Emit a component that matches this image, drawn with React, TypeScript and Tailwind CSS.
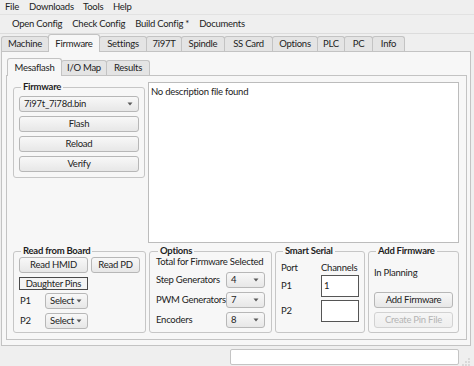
import React from "react";

const Arrow = () => (
  <svg width="6" height="4" viewBox="0 0 6 4" className="shrink-0">
    <path d="M0.5 0.5 L5.5 0.5 L3 3.5 Z" fill="#5a5a5a" />
  </svg>
);

function Btn({
  children,
  className = "",
  disabled = false,
}: {
  children: React.ReactNode;
  className?: string;
  disabled?: boolean;
}) {
  return (
    <div
      className={
        "flex items-center justify-center h-[16px] rounded-[3px] border bg-linear-to-b whitespace-nowrap " +
        (disabled
          ? "border-[#d2d2d2] from-[#f6f6f6] to-[#eeeeee] text-[#b4b4b4] "
          : "border-[#b7b7b7] from-[#f8f8f8] to-[#e7e7e7] text-[#222] ") +
        className
      }
    >
      {children}
    </div>
  );
}

function Combo({ value, className = "" }: { value: string; className?: string }) {
  return (
    <div
      className={
        "flex items-center justify-between h-[16px] rounded-[3px] border border-[#b7b7b7] bg-linear-to-b from-[#f8f8f8] to-[#e7e7e7] pl-[4px] pr-[5px] whitespace-nowrap " +
        className
      }
    >
      <span>{value}</span>
      <Arrow />
    </div>
  );
}

function Group({
  title,
  className = "",
  children,
}: {
  title: string;
  className?: string;
  children: React.ReactNode;
}) {
  return (
    <fieldset className={"border border-[#c6c6c6] rounded-[3px] px-[5px] " + className}>
      <legend className="ml-[2px] px-[2px] font-bold leading-[10px] text-[#1e1e1e] whitespace-nowrap">{title}</legend>
      {children}
    </fieldset>
  );
}

const outerTabs: [string, string][] = [
  ["Machine", "w-[48px]"],
  ["Firmware", "w-[52px]"],
  ["Settings", "w-[48px]"],
  ["7i97T", "w-[36px]"],
  ["Spindle", "w-[44px]"],
  ["SS Card", "w-[49px]"],
  ["Options", "w-[46px]"],
  ["PLC", "w-[28px]"],
  ["PC", "w-[29px]"],
  ["Info", "w-[33px]"],
];

const innerTabs: [string, string][] = [
  ["Mesaflash", "w-[55px]"],
  ["I/O Map", "w-[46px]"],
  ["Results", "w-[44px]"],
];

export default function App() {
  return (
    <div className="w-[474px] h-[366px] overflow-hidden bg-[#efefef] text-[9.5px] tracking-[-0.25px] leading-[12px] text-[#222] font-['Lato','Noto_Sans',sans-serif] flex flex-col whitespace-nowrap">
      {/* Menubar */}
      <div className="h-[15px] flex items-center pl-[5px] border-b border-[#e2e2e2]">
        <span className="w-[24px]">File</span>
        <span className="w-[54px]">Downloads</span>
        <span className="w-[30px]">Tools</span>
        <span>Help</span>
      </div>
      {/* Toolbar */}
      <div className="h-[19px] flex items-center pl-[12px] gap-[10px] border-b border-[#dcdcdc]">
        <span>Open Config</span>
        <span>Check Config</span>
        <span>Build Config *</span>
        <span>Documents</span>
      </div>
      {/* Outer tab bar */}
      <div className="h-[17px] flex items-end pl-[1px]">
        {outerTabs.map(([t, w], i) => {
          const sel = t === "Firmware";
          return (
            <div
              key={t}
              className={
                "flex items-center justify-center border border-b-0 border-[#c3c3c3] rounded-t-[3px] " +
                w +
                (i > 0 ? " -ml-px" : "") +
                (sel
                  ? " relative z-10 h-[18px] -mb-px bg-[#f7f7f7]"
                  : " h-[15px] bg-[#e4e4e4]")
              }
            >
              {t}
            </div>
          );
        })}
      </div>
      {/* Outer pane */}
      <div className="h-[295px] ml-[1px] mr-[3px] border border-[#c3c3c3] bg-[#f7f7f7] pt-[6px] pl-[4px] pr-[3px] pb-[5px] flex flex-col">
        {/* Inner tab bar */}
        <div className="h-[17px] flex items-end pl-[1px]">
          {innerTabs.map(([t, w], i) => {
            const sel = t === "Mesaflash";
            return (
              <div
                key={t}
                className={
                  "flex items-center justify-center border border-b-0 border-[#c3c3c3] rounded-t-[3px] " +
                  w +
                  (i > 0 ? " -ml-px" : "") +
                  (sel
                    ? " relative z-10 h-[18px] -mb-px bg-[#f7f7f7]"
                    : " h-[15px] bg-[#e4e4e4]")
                }
              >
                {t}
              </div>
            );
          })}
        </div>
        {/* Inner pane */}
        <div className="flex-1 border border-[#c3c3c3] bg-[#f7f7f7] pt-[6px] pl-[6px] pr-[7px] pb-[6px] flex flex-col gap-[3px]">
          {/* Top row */}
          <div className="flex-1 flex gap-[3px]">
            <div className="w-[132px] flex flex-col">
              <Group title="Firmware" className="pt-[4px] pb-[5px]">
                <div className="flex flex-col gap-[4px]">
                  <Combo value="7i97t_7i78d.bin" />
                  <Btn>Flash</Btn>
                  <Btn>Reload</Btn>
                  <Btn>Verify</Btn>
                </div>
              </Group>
            </div>
            <div className="flex-1 bg-white border border-[#bcbcbc] px-[2px] pt-[3px]">
              No description file found
            </div>
          </div>
          {/* Bottom row */}
          <div className="h-[87px] flex gap-[3px]">
            <Group title="Read from Board" className="w-[132px] pt-[1px]">
              <div className="flex gap-[3px]">
                <Btn className="w-[69px]">Read HMID</Btn>
                <Btn className="w-[49px]">Read PD</Btn>
              </div>
              <div className="mt-[4px] w-[69px] h-[13px] border border-[#4a4a4a] bg-[#f4f4f4] flex items-center justify-center">
                Daughter Pins
              </div>
              <div className="mt-[3px] flex items-center h-[16px]">
                <span className="w-[26px] pl-[1px]">P1</span>
                <Combo value="Select" className="w-[43px]" />
              </div>
              <div className="mt-[4px] flex items-center h-[16px]">
                <span className="w-[26px] pl-[1px]">P2</span>
                <Combo value="Select" className="w-[43px]" />
              </div>
            </Group>
            <Group title="Options" className="w-[124px] pt-[0px] pl-[6px] pr-[6px]">
              <div className="h-[12px]">Total for Firmware Selected</div>
              <div className="mt-[4px] flex items-center justify-between h-[16px]">
                <span>Step Generators</span>
                <Combo value="4" className="w-[39px]" />
              </div>
              <div className="mt-[4px] flex items-center justify-between h-[16px]">
                <span>PWM Generators</span>
                <Combo value="7" className="w-[39px]" />
              </div>
              <div className="mt-[4px] flex items-center justify-between h-[16px]">
                <span>Encoders</span>
                <Combo value="8" className="w-[39px]" />
              </div>
            </Group>
            <Group title="Smart Serial" className="w-[90px]">
              <div className="mt-[6px] flex h-[12px]">
                <span className="w-[40px]">Port</span>
                <span>Channels</span>
              </div>
              <div className="mt-[1px] flex items-center h-[22px]">
                <span className="w-[40px]">P1</span>
                <div className="w-[38px] h-[22px] border border-[#555] bg-white flex items-center pl-[2px]">1</div>
              </div>
              <div className="mt-[3px] flex items-center h-[22px]">
                <span className="w-[40px]">P2</span>
                <div className="w-[38px] h-[22px] border border-[#555] bg-white"></div>
              </div>
            </Group>
            <Group title="Add Firmware" className="w-[91px]">
              <div className="mt-[11px] h-[12px]">In Planning</div>
              <Btn className="mt-[13px] w-[79px]">Add Firmware</Btn>
              <Btn disabled className="mt-[4px] w-[79px]">Create Pin File</Btn>
            </Group>
          </div>
        </div>
      </div>
      {/* Status bar */}
      <div className="flex-1 flex items-start pt-[3px] pl-[230px] pr-[4px] gap-[3px]">
        <div className="w-[230px] h-[16px] bg-white border border-[#c4c4c4] rounded-[2px]"></div>
        <svg width="8" height="8" viewBox="0 0 8 8" className="mt-[9px]">
          <circle cx="7" cy="1" r="0.8" fill="#bbb" />
          <circle cx="4" cy="4" r="0.8" fill="#bbb" />
          <circle cx="7" cy="4" r="0.8" fill="#bbb" />
          <circle cx="1" cy="7" r="0.8" fill="#bbb" />
          <circle cx="4" cy="7" r="0.8" fill="#bbb" />
          <circle cx="7" cy="7" r="0.8" fill="#bbb" />
        </svg>
      </div>
    </div>
  );
}
